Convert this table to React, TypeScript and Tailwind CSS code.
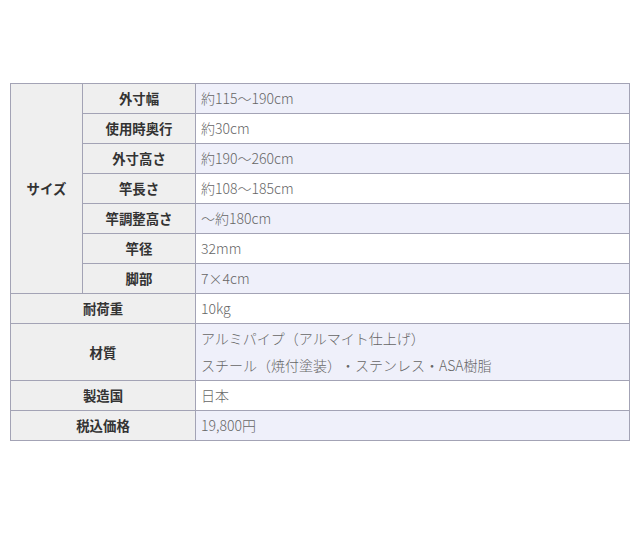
import React from 'react';

const font = { fontFamily: '"Noto Sans CJK JP", "Noto Sans", sans-serif' };

const th = 'border border-[#a3a3b5] bg-[#efefef] text-center font-bold text-[13.4px] text-[#333] px-1';
const td = 'border border-[#a3a3b5] text-left text-[14px] text-[#666] font-light pl-[5px] pr-2 [text-spacing-trim:space-all]';

const sizeRows: [string, string][] = [
  ['外寸幅', '約115〜190cm'],
  ['使用時奥行', '約30cm'],
  ['外寸高さ', '約190〜260cm'],
  ['竿長さ', '約108〜185cm'],
  ['竿調整高さ', '〜約180cm'],
  ['竿径', '32mm'],
  ['脚部', '7×4cm'],
];

function stripe(i: number) {
  return i % 2 === 0 ? 'bg-[#eff0fa]' : 'bg-white';
}

export default function App() {
  return (
    <div className="w-[640px] h-[535px] bg-white pt-[83px] px-[10px]" style={font}>
      <table className="w-[620px] border-collapse leading-[27px] table-fixed">
        <colgroup>
          <col className="w-[72px]" />
          <col className="w-[113px]" />
          <col />
        </colgroup>
        <tbody>
          {sizeRows.map(([k, v], i) => (
            <tr key={k}>
              {i === 0 && (
                <th rowSpan={7} className={th}>
                  サイズ
                </th>
              )}
              <th className={`${th} py-[1px]`}>{k}</th>
              <td className={`${td} ${stripe(i)} py-[1px]`}>{v}</td>
            </tr>
          ))}
          <tr>
            <th colSpan={2} className={`${th} py-[1px]`}>耐荷重</th>
            <td className={`${td} ${stripe(7)} py-[1px]`}>10kg</td>
          </tr>
          <tr>
            <th colSpan={2} className={`${th} py-[1px]`}>材質</th>
            <td className={`${td} ${stripe(8)} py-[1px]`}>
              アルミパイプ（アルマイト仕上げ）
              <br />
              スチール（焼付塗装）・ステンレス・ASA樹脂
            </td>
          </tr>
          <tr>
            <th colSpan={2} className={`${th} py-[1px]`}>製造国</th>
            <td className={`${td} ${stripe(9)} py-[1px]`}>日本</td>
          </tr>
          <tr>
            <th colSpan={2} className={`${th} py-[1px]`}>税込価格</th>
            <td className={`${td} ${stripe(10)} py-[1px]`}>19,800円</td>
          </tr>
        </tbody>
      </table>
    </div>
  );
}
